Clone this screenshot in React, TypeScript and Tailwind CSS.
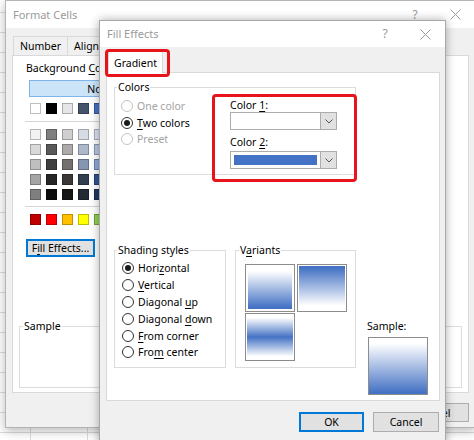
import React from "react";

function U({ children }: { children: React.ReactNode }) {
  return <span className="underline underline-offset-[2px] decoration-1">{children}</span>;
}

function Radio({
  checked = false,
  disabled = false,
  tall = false,
  children,
}: {
  checked?: boolean;
  disabled?: boolean;
  tall?: boolean;
  children: React.ReactNode;
}) {
  return (
    <div className={`flex items-center ${tall ? "h-[16.8px]" : "h-[16.5px]"}`}>
      <span
        className={`w-[12px] h-[12px] rounded-full border bg-white flex items-center justify-center shrink-0 ${
          disabled ? "border-[#c4c4c4]" : "border-[#333333]"
        }`}
      >
        {checked && <span className="w-[6px] h-[6px] rounded-full bg-[#1a1a1a]" />}
      </span>
      <span className={`ml-[4px] whitespace-nowrap ${disabled ? "text-[#a3a3a3]" : "text-black"}`}>{children}</span>
    </div>
  );
}

function Chevron() {
  return (
    <svg width="8" height="5" viewBox="0 0 8 5">
      <path d="M0.5 0.5 L4 4 L7.5 0.5" stroke="#555555" strokeWidth="1" fill="none" />
    </svg>
  );
}

function Combo({ fill = false }: { fill?: boolean }) {
  return (
    <div className="flex h-[18px] w-[107px] border border-[#acacac] bg-white">
      <div className="flex-1 px-[3px] py-[3px]">{fill && <div className="h-full bg-[#4472c4]" />}</div>
      <div className="w-[16px] bg-[#e1e1e1] border-l border-[#acacac] flex items-center justify-center">
        <Chevron />
      </div>
    </div>
  );
}

function CloseX() {
  return (
    <svg width="11" height="11" viewBox="0 0 11 11">
      <path d="M0.5 0.5 L10.5 10.5 M10.5 0.5 L0.5 10.5" stroke="#9a9a9a" strokeWidth="1" fill="none" />
    </svg>
  );
}

const theme = ["#ffffff", "#000000", "#e7e6e6", "#44546a", "#4472c4", "#ed7d31", "#a5a5a5", "#ffc000", "#5b9bd5", "#70ad47"];
const tints = [
  ["#f2f2f2", "#7f7f7f", "#d0cece", "#d6dce4", "#d9e2f3", "#fbe5d5", "#ededed", "#fff2cc", "#deebf6", "#e2efd9"],
  ["#d9d9d9", "#595959", "#aeaaaa", "#adb9ca", "#b4c6e7", "#f7cbac", "#dbdbdb", "#fee599", "#bdd7ee", "#c5e0b3"],
  ["#bfbfbf", "#3f3f3f", "#757070", "#8496b0", "#8eaadb", "#f4b183", "#c9c9c9", "#ffd965", "#9cc3e5", "#a8d08d"],
  ["#a5a5a5", "#262626", "#3a3838", "#323f4f", "#2f5496", "#c55a11", "#7b7b7b", "#bf9000", "#2e75b5", "#538135"],
  ["#7f7f7f", "#0c0c0c", "#171616", "#222a35", "#1f3864", "#833c0b", "#525252", "#7f6000", "#1e4e79", "#375623"],
];
const standard = ["#c00000", "#ff0000", "#ffc000", "#ffff00", "#92d050", "#00b050", "#00b0f0", "#0070c0", "#002060", "#7030a0"];

function SwatchRow({ colors }: { colors: string[] }) {
  return (
    <div className="flex gap-[5px] ml-[17px]">
      {colors.map((c, i) => (
        <div key={i} className="w-[11px] h-[11px] border border-black/25 shrink-0" style={{ backgroundColor: c }} />
      ))}
    </div>
  );
}

function FormatCells() {
  return (
    <div className="absolute left-[5px] top-0 w-[471px] h-[428px] bg-[#f0f0f0] border border-[#b4b4b4] shadow-[0_3px_10px_rgba(0,0,0,0.28)] flex flex-col">
      <div className="h-[27px] bg-white flex items-center shrink-0">
        <span className="pl-[7px] text-[#9a9a9a] text-[11px]">Format Cells</span>
        <span className="ml-auto w-[40px] text-center text-[#9a9a9a] text-[12px]">?</span>
        <span className="w-[40px] flex items-center justify-center">
          <CloseX />
        </span>
      </div>
      <div className="px-[6px] flex flex-col">
        <div className="pt-[8px] flex pl-px">
          {["Number", "Alignment", "Font", "Border", "Fill", "Protection"].map((t, i) => (
            <div
              key={t}
              className={`h-[19px] px-[6px] flex items-center border border-b-0 border-[#d9d9d9] bg-[#f0f0f0] ${i > 0 ? "-ml-px" : ""}`}
            >
              {t}
            </div>
          ))}
        </div>
        <div className="h-[338px] bg-white border border-[#d9d9d9] flex flex-col">
          <div className="pl-[13px] pt-[5px]">
            Background <U>C</U>olor:
          </div>
          <div className="ml-[16px] mt-[5px] w-[160px] h-[17px] bg-[#cce4f7] border border-[#7eb4ea] flex items-center justify-center">
            No Color
          </div>
          <div className="mt-[6px]">
            <SwatchRow colors={theme} />
          </div>
          <div className="ml-[12px] mt-[7px] w-[172px] h-px bg-[#d4d4d4]" />
          <div className="mt-[7px] flex flex-col gap-[4px]">
            {tints.map((r, i) => (
              <SwatchRow key={i} colors={r} />
            ))}
          </div>
          <div className="ml-[12px] mt-[6px] w-[172px] h-px bg-[#d4d4d4]" />
          <div className="mt-[7px]">
            <SwatchRow colors={standard} />
          </div>
          <div className="ml-[13px] mt-[14px] w-[69px] h-[18px] bg-[#e1e1e1] border-2 border-[#0078d7] flex items-center justify-center">
            F<U>i</U>ll Effects...
          </div>
          <fieldset className="mx-[6px] mt-[62px] h-[69px] border border-[#dcdcdc]">
            <legend className="ml-[3px] px-px">Sample</legend>
          </fieldset>
        </div>
        <div className="flex justify-end mt-[10px]">
          <div className="w-[70px] h-[19px] bg-[#e1e1e1] border border-[#adadad] flex items-center justify-center">
            Cancel
          </div>
        </div>
      </div>
    </div>
  );
}

function Tile({ kind }: { kind: 1 | 2 | 3 }) {
  const g =
    kind === 1
      ? "bg-[linear-gradient(to_bottom,#ffffff_10%,#4472c4_96%)]"
      : kind === 2
      ? "bg-[linear-gradient(to_bottom,#4472c4_4%,#ffffff_90%)]"
      : "bg-[linear-gradient(to_bottom,#ffffff_6%,#4472c4_50%,#ffffff_94%)]";
  return (
    <div className={`w-[50px] h-[48px] border border-[#8c8c8c] bg-white ${kind === 1 ? "p-[2px]" : "p-px"}`}>
      <div className={`h-full ${g}`} />
    </div>
  );
}

function FillEffects() {
  return (
    <div className="absolute left-[99px] top-[20px] w-[347px] h-[430px] bg-[#f0f0f0] border border-[#a8a8a8] shadow-[0_0_9px_rgba(0,0,0,0.32)] flex flex-col">
      <div className="h-[26px] bg-white flex items-center shrink-0">
        <span className="pl-[7px] text-[#9a9a9a] text-[11px]">Fill Effects</span>
        <span className="ml-auto w-[40px] text-center text-[#9a9a9a] text-[12px]">?</span>
        <span className="w-[40px] flex items-center justify-center">
          <CloseX />
        </span>
      </div>
      <div className="pl-[6px] pr-[5px] flex flex-col">
        <div className="pt-[4px] flex pl-[2px]">
          <div className="relative z-10 -mb-px h-[22px] w-[55px] bg-white border border-b-0 border-[#d9d9d9] flex items-center pl-[5px]">
            Gradient
          </div>
        </div>
        <div className="h-[329px] bg-white border border-[#d9d9d9] flex flex-col">
          <fieldset className="ml-[7px] mt-[7px] w-[242px] h-[95px] border border-[#dcdcdc]">
            <legend className="ml-[2px] px-px">Colors</legend>
            <div className="flex pt-[4px] pl-[6px]">
              <div className="w-[109px] flex flex-col">
                <Radio disabled>One color</Radio>
                <Radio checked>
                  <U>T</U>wo colors
                </Radio>
                <Radio disabled>Preset</Radio>
              </div>
              <div className="flex flex-col">
                <div>
                  Color <U>1</U>:
                </div>
                <Combo />
                <div className="mt-[5px]">
                  Color <U>2</U>:
                </div>
                <div className="mt-[2px]">
                  <Combo fill />
                </div>
              </div>
            </div>
          </fieldset>
          <div className="flex ml-[7px] mt-[68px]">
            <fieldset className="w-[112px] h-[125px] border border-[#dcdcdc]">
              <legend className="ml-[2px] px-px">Shading styles</legend>
              <div className="flex flex-col pt-[3px] pl-[7px]">
                <Radio checked tall>
                  Hori<U>z</U>ontal
                </Radio>
                <Radio tall>
                  <U>V</U>ertical
                </Radio>
                <Radio tall>
                  Diagonal <U>u</U>p
                </Radio>
                <Radio tall>
                  Diagonal <U>d</U>own
                </Radio>
                <Radio tall>
                  <U>F</U>rom corner
                </Radio>
                <Radio tall>
                  Fro<U>m</U> center
                </Radio>
              </div>
            </fieldset>
            <fieldset className="ml-[9px] w-[121px] h-[125px] border border-[#dcdcdc]">
              <legend className="ml-[3px] px-px">
                V<U>a</U>riants
              </legend>
              <div className="grid grid-cols-[50px_50px] gap-x-[2px] gap-y-px pt-[7px] pl-[9px]">
                <Tile kind={1} />
                <Tile kind={2} />
                <Tile kind={3} />
              </div>
            </fieldset>
            <div className="ml-[11px] mt-[76px] flex flex-col">
              <div>Sample:</div>
              <div className="ml-px mt-[4px] w-[60px] h-[58px] border border-[#8c8c8c] bg-[linear-gradient(to_bottom,#ffffff_10%,#4472c4_98%)]" />
            </div>
          </div>
        </div>
        <div className="flex justify-end gap-[9px] mt-[11px] pr-px">
          <div className="w-[65px] h-[20px] bg-[#e1e1e1] border-2 border-[#0078d7] flex items-center justify-center">OK</div>
          <div className="w-[66px] h-[20px] bg-[#e1e1e1] border border-[#adadad] flex items-center justify-center">Cancel</div>
        </div>
      </div>
    </div>
  );
}

export default function App() {
  return (
    <div className="relative w-[474px] h-[440px] overflow-hidden bg-white bg-[linear-gradient(#dcdcdc_1px,transparent_1px),linear-gradient(90deg,#dcdcdc_1px,transparent_1px)] bg-[length:57px_20px] bg-[position:30px_12px] font-['Noto_Sans',sans-serif] text-[10.5px] leading-[14px] text-black">
      <FormatCells />
      <FillEffects />
      <div className="absolute left-[105px] top-[49px] w-[65px] h-[28px] border-[3px] border-[#e8141c] rounded-[4px] z-50 pointer-events-none" />
      <div className="absolute left-[212px] top-[94px] w-[145px] h-[88px] border-[3px] border-[#e8141c] rounded-[4px] z-50 pointer-events-none" />
    </div>
  );
}
